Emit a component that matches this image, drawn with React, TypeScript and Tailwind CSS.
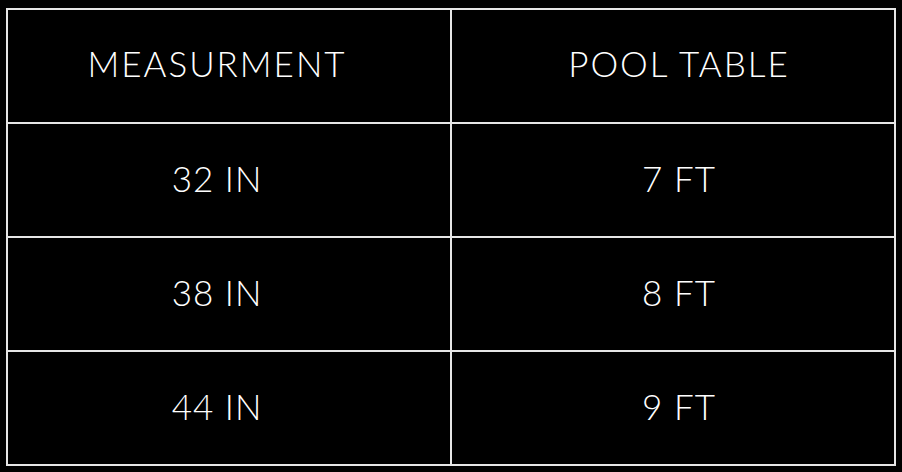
const rows = [
  ['32 IN', '7 FT'],
  ['38 IN', '8 FT'],
  ['44 IN', '9 FT'],
];

export default function App() {
  return (
    <div className="w-[902px] h-[472px] bg-black pl-[6px] pt-[8px] font-['Lato',sans-serif] font-light text-white">
      <table className="w-[890px] h-[457px] border-collapse border-2 border-[#e6e6e6] table-fixed">
        <thead>
          <tr className="h-[114px]">
            <th className="w-[444px] border-2 border-[#e6e6e6] pr-[24px] pb-[6px] text-[35px] font-light tracking-[2px]">MEASURMENT</th>
            <th className="border-2 border-[#e6e6e6] pl-[12px] pb-[6px] text-[35px] font-light tracking-[2px]">POOL TABLE</th>
          </tr>
        </thead>
        <tbody>
          {rows.map(([a, b]) => (
            <tr key={a} className="h-[114px]">
              <td className="border-2 border-[#e6e6e6] pr-[24px] pb-[4px] text-center text-[35px] tracking-[1px]">{a}</td>
              <td className="border-2 border-[#e6e6e6] pl-[12px] pb-[4px] text-center text-[35px] tracking-[1px]">{b}</td>
            </tr>
          ))}
        </tbody>
      </table>
    </div>
  );
}
